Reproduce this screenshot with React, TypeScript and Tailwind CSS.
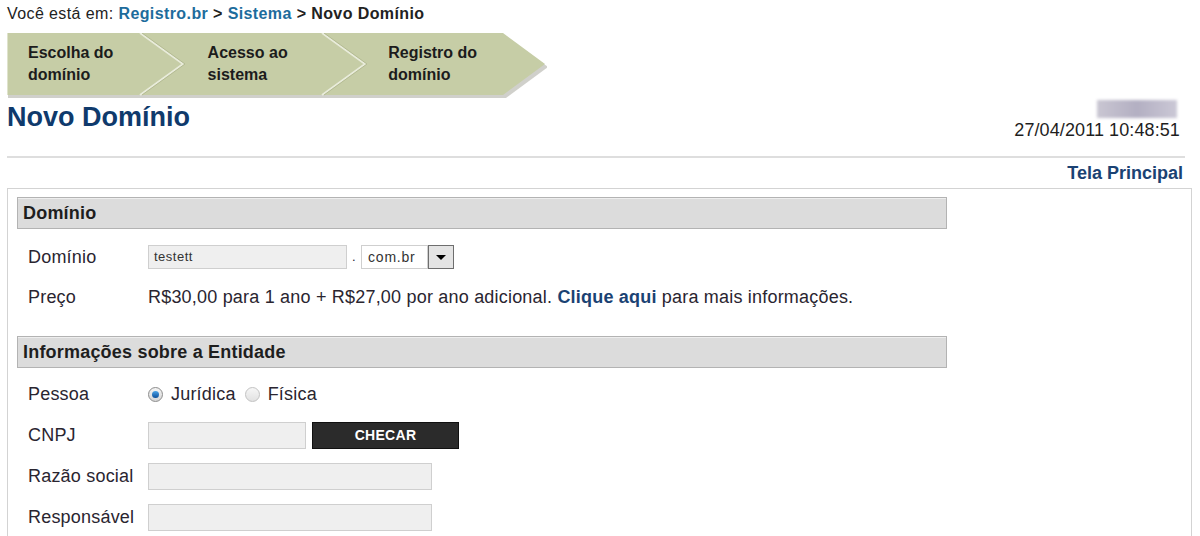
const Radio = ({ checked }: { checked?: boolean }) => {
  return (
    <span
      className={
        checked
          ? "flex h-[15px] w-[15px] items-center justify-center rounded-full border border-[#8c8c8c] bg-gradient-to-b from-[#f4f4f4] to-[#d6d6d6]"
          : "flex h-[15px] w-[15px] items-center justify-center rounded-full border border-[#c2c2c2] bg-gradient-to-b from-[#f6f6f6] to-[#e2e2e2]"
      }
    >
      {checked && <span className="h-[7px] w-[7px] rounded-full bg-gradient-to-b from-[#4aa3e8] to-[#0b4f9a]" />}
    </span>
  )
}

const SectionHeader = ({ title }: { title: string }) => {
  return (
    <div className="flex h-[32px] w-[930px] items-center border border-[#b3b3b3] bg-[#dcdcdc] px-[5px] text-[18px] font-bold text-[#1e1e1e] shadow-[inset_0_1px_0_#eeeeee]">
      {title}
    </div>
  )
}

const Field = ({ w }: { w: string }) => {
  return <div className={`h-[27px] ${w} border border-[#cfcfcf] bg-[#efefef]`} />
}

export default function App() {
  return (
    <div className="h-[536px] w-[1200px] overflow-hidden bg-white pl-[7px] pr-[8px] font-['Liberation_Sans',Arial,sans-serif] text-[#2a2530]">
      {/* breadcrumb */}
      <div className="pt-[4px] text-[16px] leading-[20px] tracking-[0.4px] text-[#222]">
        Você está em: <span className="font-bold text-[#1d6c9c]">Registro.br</span>
        <span className="font-bold"> &gt; </span>
        <span className="font-bold text-[#1d6c9c]">Sistema</span>
        <span className="font-bold"> &gt; Novo Domínio</span>
      </div>

      {/* steps */}
      <div className="relative mt-[9px] h-[66px] w-[540px]">
        <svg className="absolute inset-0" width="540" height="66" viewBox="0 0 540 66">
          <polygon points="1,3 499,3 541,34 499,65 1,65" fill="#a9a9a0" opacity="0.55" />
          <polygon points="0,0 496,0 538,31 496,62 0,62" fill="#c6cda6" />
          <polyline points="133,0 176,31 133,62" fill="none" stroke="#e9ecdb" strokeWidth="2" />
          <polyline points="135,0 178,31 135,62" fill="none" stroke="#b4bb93" strokeWidth="1" />
          <polyline points="315,0 358,31 315,62" fill="none" stroke="#e9ecdb" strokeWidth="2" />
          <polyline points="317,0 360,31 317,62" fill="none" stroke="#b4bb93" strokeWidth="1" />
          <line x1="0" y1="0" x2="0" y2="62" stroke="#dfe3cc" strokeWidth="2" />
        </svg>
        <div className="relative flex h-[62px] items-center pl-[21px] text-[16px] font-bold leading-[22px] text-[#1c1c1c]">
          <div className="w-[181px]">
            Escolha do
            <br />
            domínio
          </div>
          <div className="w-[182px]">
            Acesso ao
            <br />
            sistema
          </div>
          <div className="w-[160px]">
            Registro do
            <br />
            domínio
          </div>
        </div>
      </div>

      {/* title */}
      <div className="flex items-start justify-between">
        <h1 className="mt-[3px] text-[27px] font-bold leading-[30px] text-[#0f3a6c]">Novo Domínio</h1>
        <div className="mr-[12px] flex flex-col items-end">
          <div className="mt-[1px] mr-[3px] h-[18px] w-[80px] bg-gradient-to-r from-[#c9c6d2] via-[#b3afc2] to-[#cbc8d6] blur-[1.5px]" />
          <div className="mt-[2px] text-[18px] leading-[20px] tracking-[0.1px] text-[#1e1e1e]">27/04/2011 10:48:51</div>
        </div>
      </div>

      <div className="mt-[16px] mr-[7px] h-[2px] bg-[#dedede]" />

      <div className="mt-[5px] mr-[9px] text-right text-[18px] font-bold leading-[20px] text-[#1b4273]">Tela Principal</div>

      {/* form box */}
      <div className="mt-[5px] h-[400px] border border-[#d3d3d3] pl-[9px] pt-[8px] text-[18px] tracking-[0.2px]">
        <SectionHeader title="Domínio" />

        <div className="mt-[8px] flex h-[40px] items-center pl-[11px]">
          <div className="w-[120px]">Domínio</div>
          <div className="flex h-[24px] w-[199px] items-center border border-[#cfcfcf] bg-[#efefef] px-[5px] text-[13px] tracking-[0.5px] text-[#333]">
            testett
          </div>
          <div className="w-[14px] text-center text-[13px]">.</div>
          <div className="flex h-[24px] w-[67px] items-center border border-[#cfcfcf] bg-white px-[6px] text-[14px] tracking-[0.8px] text-[#333]">
            com.br
          </div>
          <div className="flex h-[24px] w-[26px] items-center justify-center border border-[#6e6e6e] bg-[#e4e4e4]">
            <span className="mt-[1px] h-0 w-0 border-x-[5px] border-t-[5px] border-x-transparent border-t-black" />
          </div>
        </div>

        <div className="flex h-[40px] items-center pl-[11px]">
          <div className="w-[120px]">Preço</div>
          <div>
            R$30,00 para 1 ano + R$27,00 por ano adicional.{" "}
            <span className="font-bold text-[#1b4273]">Clique aqui</span> para mais informações.
          </div>
        </div>

        <div className="mt-[19px]">
          <SectionHeader title="Informações sobre a Entidade" />
        </div>

        <div className="mt-[6px] flex h-[41px] items-center pl-[11px]">
          <div className="w-[120px]">Pessoa</div>
          <div className="flex items-center gap-[8px]">
            <Radio checked />
            <span>Jurídica</span>
          </div>
          <div className="ml-[9px] flex items-center gap-[8px]">
            <Radio />
            <span>Física</span>
          </div>
        </div>

        <div className="flex h-[41px] items-center pl-[11px]">
          <div className="w-[120px]">CNPJ</div>
          <Field w="w-[158px]" />
          <button className="ml-[6px] flex h-[27px] w-[147px] items-center justify-center border border-[#111] bg-[#2b2b2b] text-[14px] font-bold tracking-[0.3px] text-white">
            CHECAR
          </button>
        </div>

        <div className="flex h-[41px] items-center pl-[11px]">
          <div className="w-[120px]">Razão social</div>
          <Field w="w-[284px]" />
        </div>

        <div className="flex h-[41px] items-center pl-[11px]">
          <div className="w-[120px]">Responsável</div>
          <Field w="w-[284px]" />
        </div>
      </div>
    </div>
  )
}
